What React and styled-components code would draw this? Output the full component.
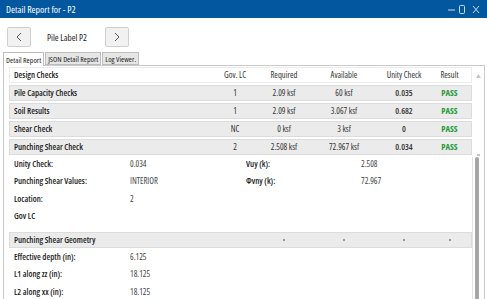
import React from "react";
import styled, { createGlobalStyle } from "styled-components";

const GlobalStyle = createGlobalStyle`
  html, body {
    margin: 0;
    padding: 0;
    background: #fff;
  }
  body {
    width: 487px;
    height: 299px;
    overflow: hidden;
    font-family: "Open Sans", "DejaVu Sans", sans-serif;
    font-stretch: 75%;
    color: #222;
  }
  * {
    box-sizing: border-box;
  }
`;

const Window = styled.div`
  width: 487px;
  height: 299px;
  display: flex;
  flex-direction: column;
  overflow: hidden;
`;

const TitleBar = styled.div`
  height: 18px;
  flex: none;
  display: flex;
  align-items: center;
  padding: 0 7px 0 6px;
  background: #03579f;
  color: #fff;
  font-size: 9.7px;
`;

const WindowControls = styled.div`
  margin-left: auto;
  display: flex;
  align-items: center;
  color: #c9dbee;
`;

const NavRow = styled.div`
  flex: none;
  display: flex;
  align-items: center;
  margin: 9px 0 0 7px;
  height: 20px;
`;

const NavButton = styled.button`
  width: 24px;
  height: 20px;
  padding: 0;
  display: flex;
  align-items: center;
  justify-content: center;
  background: #f1f1f1;
  border: 1px solid #cfcfcf;
  border-radius: 2px;
  color: #555;
`;

const PileLabel = styled.span`
  width: 74px;
  padding-left: 16px;
  font-size: 9.2px;
  color: #222;
`;

const TabStrip = styled.div`
  flex: none;
  display: flex;
  align-items: flex-end;
  height: 13px;
  margin-top: 5px;
  padding-left: 3px;
  position: relative;
  z-index: 1;
`;

const Tab = styled.div`
  height: ${(p) => (p.$active ? "14px" : "13px")};
  margin-bottom: ${(p) => (p.$active ? "-1px" : "0")};
  padding: 0 2px;
  display: flex;
  align-items: center;
  font-size: 7.8px;
  color: #222;
  background: ${(p) => (p.$active ? "#fff" : "#e6e6e6")};
  border: 1px solid #bdbdbd;
  border-bottom: ${(p) => (p.$active ? "none" : "1px solid #bdbdbd")};
  margin-right: 1px;
`;

const Panel = styled.div`
  flex: 1;
  display: flex;
  margin: 0 2px 0 3px;
  border: 1px solid #cacaca;
  border-bottom: none;
  min-height: 0;
`;

const Content = styled.div`
  flex: 1;
  padding-left: 5px;
  display: flex;
  flex-direction: column;
`;

const Table = styled.div`
  display: flex;
  flex-direction: column;
  gap: 2px;
  margin-top: 1px;
`;

const TableRow = styled.div`
  height: 16px;
  display: grid;
  grid-template-columns: 196px 50px 48px 72px 48px 1fr;
  align-items: center;
  padding-left: 4px;
  font-size: 8.6px;
  background: ${(p) => (p.$header ? "#fff" : "#ebebeb")};
  border: 1px solid ${(p) => (p.$header ? "#ececec" : "#dcdcdc")};
`;

const Label = styled.span`
  font-weight: 650;
  color: #1c1c1c;
`;

const Cell = styled.span`
  text-align: center;
  color: ${(p) => (p.$pass ? "#2a9a3a" : "#333")};
  font-weight: ${(p) => (p.$pass ? 700 : p.$bold ? 650 : 400)};
`;

const Dot = styled.span`
  justify-self: center;
  width: 2px;
  height: 2px;
  background: #9a9a9a;
`;

const DetailGrid = styled.div`
  display: grid;
  grid-template-columns: 116px 116px 115px 1fr;
  grid-auto-rows: 17.5px;
  align-items: center;
  padding-left: 5px;
  font-size: 8.6px;
`;

const Value = styled.span`
  color: #444;
`;

const Section = styled.div`
  margin-top: ${(p) => p.$gap || 0}px;
`;

const Scrollbar = styled.div`
  width: 12px;
  flex: none;
  display: flex;
  flex-direction: column;
  align-items: center;
`;

const Arrow = styled.div`
  height: ${(p) => p.$h}px;
  display: flex;
  align-items: ${(p) => (p.$down ? "flex-end" : "center")};
  justify-content: center;
  padding-left: 1px;
`;

const Track = styled.div`
  flex: 1;
  width: 12px;
  border-left: 1px solid #e2e2e2;
  padding: 0 0 0 2px;
  display: flex;
`;

const Thumb = styled.div`
  width: 4px;
  height: 100%;
  background: #a6a6a6;
  border-radius: 2px 2px 0 0;
`;

const Chevron = ({ dir }) => (
  <svg width="6" height="10" viewBox="0 0 6 10">
    <polyline
      points={dir === "left" ? "5,1 1,5 5,9" : "1,1 5,5 1,9"}
      fill="none"
      stroke="#555"
      strokeWidth="1"
    />
  </svg>
);

const checks = [
  { name: "Pile Capacity Checks", lc: "1", req: "2.09 ksf", avail: "60 ksf", uc: "0.035" },
  { name: "Soil Results", lc: "1", req: "2.09 ksf", avail: "3.067 ksf", uc: "0.682" },
  { name: "Shear Check", lc: "NC", req: "0 ksf", avail: "3 ksf", uc: "0" },
  { name: "Punching Shear Check", lc: "2", req: "2.508 ksf", avail: "72.967 ksf", uc: "0.034" },
];

const App = () => {
  return (
    <Window>
      <GlobalStyle />
      <TitleBar>
        Detail Report for - P2
        <WindowControls>
          <svg width="32" height="11" viewBox="0 0 32 11">
            <line x1="0" y1="6" x2="7" y2="6" stroke="#c9dbee" strokeWidth="1" />
            <rect x="11.5" y="1.5" width="5" height="8" rx="1" fill="none" stroke="#c9dbee" strokeWidth="1" />
            <line x1="25" y1="2" x2="31" y2="9" stroke="#c9dbee" strokeWidth="1" />
            <line x1="31" y1="2" x2="25" y2="9" stroke="#c9dbee" strokeWidth="1" />
          </svg>
        </WindowControls>
      </TitleBar>

      <NavRow>
        <NavButton>
          <Chevron dir="left" />
        </NavButton>
        <PileLabel>Pile Label P2</PileLabel>
        <NavButton>
          <Chevron dir="right" />
        </NavButton>
      </NavRow>

      <TabStrip>
        <Tab $active>Detail Report</Tab>
        <Tab>JSON Detail Report</Tab>
        <Tab>Log Viewer.</Tab>
      </TabStrip>

      <Panel>
        <Content>
          <Table>
            <TableRow $header>
              <Label>Design Checks</Label>
              <Cell>Gov. LC</Cell>
              <Cell>Required</Cell>
              <Cell>Available</Cell>
              <Cell>Unity Check</Cell>
              <Cell>Result</Cell>
            </TableRow>
            {checks.map((c) => (
              <TableRow key={c.name}>
                <Label>{c.name}</Label>
                <Cell>{c.lc}</Cell>
                <Cell>{c.req}</Cell>
                <Cell>{c.avail}</Cell>
                <Cell $bold>{c.uc}</Cell>
                <Cell $pass>PASS</Cell>
              </TableRow>
            ))}
          </Table>

          <DetailGrid>
            <Label>Unity Check:</Label>
            <Value>0.034</Value>
            <Label>Vuy (k):</Label>
            <Value>2.508</Value>
            <Label>Punching Shear Values:</Label>
            <Value>INTERIOR</Value>
            <Label>Φvny (k):</Label>
            <Value>72.967</Value>
            <Label>Location:</Label>
            <Value>2</Value>
            <span />
            <span />
            <Label>Gov LC</Label>
          </DetailGrid>

          <Section $gap={7}>
            <TableRow>
              <Label>Punching Shear Geometry</Label>
              <span />
              <Dot />
              <Dot />
              <Dot />
              <Dot />
            </TableRow>
          </Section>

          <DetailGrid>
            <Label>Effective depth (in):</Label>
            <Value>6.125</Value>
            <span />
            <span />
            <Label>L1 along zz (in):</Label>
            <Value>18.125</Value>
            <span />
            <span />
            <Label>L2 along xx (in):</Label>
            <Value>18.125</Value>
          </DetailGrid>
        </Content>

        <Scrollbar>
          <Arrow $h={20}>
            <svg width="5" height="4" viewBox="0 0 5 4">
              <polygon points="2.5,0 5,4 0,4" fill="#c4c4c4" />
            </svg>
          </Arrow>
          <Arrow $h={71} $down>
            <svg width="3" height="3" viewBox="0 0 3 3">
              <rect width="3" height="2" fill="#c4c4c4" />
            </svg>
          </Arrow>
          <Track>
            <Thumb />
          </Track>
        </Scrollbar>
      </Panel>
    </Window>
  );
};

export default App;
